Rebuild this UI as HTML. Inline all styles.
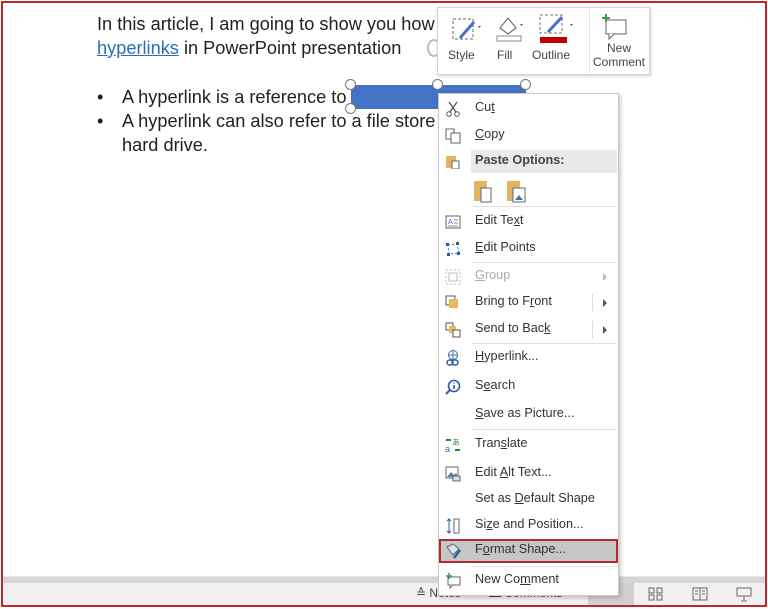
<!DOCTYPE html>
<html><head><meta charset="utf-8"><style>
*{margin:0;padding:0;box-sizing:border-box}
body{width:768px;height:609px;overflow:hidden;background:#fff;position:relative;font-family:"Liberation Sans",sans-serif}
.frame{position:absolute;left:1px;top:1px;width:766px;height:606px;border:2px solid #c0272d;pointer-events:none;z-index:20}
.art{position:absolute;left:97px;font-size:18.2px;color:#222;white-space:nowrap}
.bar1{position:absolute;left:3px;top:576px;width:762px;height:7px;background:#d6d6d6;border-top:1px solid #e8e8e8}
.status{position:absolute;left:3px;top:583px;width:762px;height:23px;background:#f1f1f1;font-size:12px;color:#444}
.mini{position:absolute;left:437px;top:7px;width:213px;height:68px;background:#fff;border:1px solid #d4d4d4;box-shadow:1px 1px 3px rgba(0,0,0,.2);font-size:12px;color:#444}
.mini div{position:absolute;text-align:center}
.menu{position:absolute;left:438px;top:93px;width:181px;height:503px;background:#fff;border:1px solid #c8c8c8;box-shadow:2px 2px 4px rgba(0,0,0,.2);font-size:12.7px;color:#333;z-index:5}
.it{position:absolute;left:36px;white-space:nowrap}
.sep{position:absolute;left:32px;right:2px;height:1px;background:#e1e1e1}
.ic{position:absolute;left:6px;width:16px;height:16px}
.arr{position:absolute;left:164px;width:0;height:0;border-left:4px solid #555;border-top:4px solid transparent;border-bottom:4px solid transparent}
u{text-decoration:underline}
</style></head><body>
<div class="frame"></div>
<div class="art" style="top:14px">In this article, I am going to show you how</div>
<div class="art" style="top:38px"><span style="color:#2a6ebb;text-decoration:underline">hyperlinks</span> in PowerPoint presentation</div>
<div style="position:absolute;left:427px;top:39px;width:14px;height:18px;border:2px solid #bbb;border-radius:50%"></div>
<div class="art" style="top:87px;left:97px">•</div>
<div class="art" style="top:87px;left:122px">A hyperlink is a reference to</div>
<div class="art" style="top:111px;left:97px">•</div>
<div class="art" style="top:111px;left:122px">A hyperlink can also refer to a file store</div>
<div class="art" style="top:135px;left:122px">hard drive.</div>
<div style="position:absolute;left:351px;top:85px;width:175px;height:24px;background:#4472c4"></div>
<div style="position:absolute;left:345px;top:79px;width:11px;height:11px;border:1px solid #777;border-radius:50%;background:#fff"></div>
<div style="position:absolute;left:432px;top:79px;width:11px;height:11px;border:1px solid #777;border-radius:50%;background:#fff"></div>
<div style="position:absolute;left:520px;top:79px;width:11px;height:11px;border:1px solid #777;border-radius:50%;background:#fff"></div>
<div style="position:absolute;left:345px;top:103px;width:11px;height:11px;border:1px solid #777;border-radius:50%;background:#fff"></div>

<div class="mini">
 <svg style="position:absolute;left:12px;top:6px" width="34" height="30"><rect x="3" y="5" width="20" height="20" fill="none" stroke="#666" stroke-dasharray="3 2"/><path d="M10 24 L24 8" stroke="#4472c4" stroke-width="3"/><path d="M28 12l3 0l-1.5 2z" fill="#555"/></svg>
 <svg style="position:absolute;left:56px;top:4px" width="34" height="32"><path d="M6 16 L14 6 L22 16 L14 22z" fill="none" stroke="#555"/><rect x="3" y="24" width="24" height="5" fill="none" stroke="#888"/><path d="M26 12l3 0l-1.5 2z" fill="#555"/></svg>
 <svg style="position:absolute;left:100px;top:4px" width="40" height="32"><rect x="2" y="3" width="22" height="18" fill="none" stroke="#777" stroke-dasharray="3 2"/><path d="M10 20 L24 5" stroke="#4472c4" stroke-width="3"/><rect x="2" y="25" width="27" height="6" fill="#c00000"/><path d="M32 12l3 0l-1.5 2z" fill="#555"/></svg>
 <div style="left:10px;top:40px">Style</div>
 <div style="left:59px;top:40px">Fill</div>
 <div style="left:94px;top:40px">Outline</div>
 <div style="left:151px;top:0;width:1px;height:66px;background:#e5e5e5"></div>
 <svg style="position:absolute;left:163px;top:6px" width="30" height="28"><rect x="5" y="6" width="20" height="14" fill="none" stroke="#666"/><path d="M8 20 l0 5 l5 -5" fill="#fff" stroke="#666"/><path d="M5 0v8M1 4h8" stroke="#3a9a5a" stroke-width="2"/></svg>
 <div style="left:155px;top:33px;line-height:14px">New<br>Comment</div>
</div>

<div class="menu">
 <svg class="ic" style="top:7px" viewBox="0 0 16 16"><path d="M4 1 L11 11 M12 1 L5 11" stroke="#555" stroke-width="1.3"/><circle cx="4" cy="13" r="2.3" fill="none" stroke="#555"/><circle cx="12" cy="13" r="2.3" fill="none" stroke="#555"/></svg>
 <div class="it" style="top:6px">Cu<u>t</u></div>
 <svg class="ic" style="top:34px" viewBox="0 0 16 16"><rect x="1" y="1" width="8" height="10" fill="#fff" stroke="#666"/><rect x="6" y="5" width="9" height="10" fill="#fff" stroke="#666"/></svg>
 <div class="it" style="top:33px"><u>C</u>opy</div>
 <div style="position:absolute;left:32px;top:56px;width:146px;height:23px;background:#e9e9e9"></div>
 <svg class="ic" style="top:59px" viewBox="0 0 16 16"><rect x="1" y="3" width="10" height="12" fill="#e3b560"/><rect x="7" y="8" width="7" height="8" fill="#fff" stroke="#666"/></svg>
 <div class="it" style="top:59px;font-weight:bold;color:#444">Paste Options:</div>
 <svg style="position:absolute;left:34px;top:84px" width="60" height="26"><rect x="1" y="3" width="13" height="20" fill="#e3b560"/><rect x="8" y="10" width="10" height="14" fill="#fff" stroke="#666"/><rect x="34" y="3" width="13" height="20" fill="#e3b560"/><rect x="40" y="10" width="12" height="14" fill="#fff" stroke="#666"/><path d="M42 22 l4-5 l4 5z" fill="#4472c4"/></svg>
 <div class="sep" style="top:112px"></div>
 <svg class="ic" style="top:120px" viewBox="0 0 16 16"><rect x="1" y="2" width="14" height="12" fill="none" stroke="#666"/><text x="3" y="10" font-size="7" fill="#3a6fb0">A</text><path d="M9 6h4M9 9h4M3 12h10" stroke="#888"/></svg>
 <div class="it" style="top:119px">Edit Te<u>x</u>t</div>
 <svg class="ic" style="top:147px" viewBox="0 0 16 16"><path d="M3 4 L12 3 L14 12 L4 13z" fill="none" stroke="#3a6fb0" stroke-dasharray="2 2"/><rect x="1" y="2" width="3" height="3" fill="#2a5fa0"/><rect x="11" y="1" width="3" height="3" fill="#2a5fa0"/><rect x="12" y="11" width="3" height="3" fill="#2a5fa0"/><rect x="2" y="12" width="3" height="3" fill="#2a5fa0"/></svg>
 <div class="it" style="top:146px"><u>E</u>dit Points</div>
 <div class="sep" style="top:168px"></div>
 <svg class="ic" style="top:175px" viewBox="0 0 16 16"><rect x="1" y="1" width="14" height="14" fill="none" stroke="#bbb" stroke-dasharray="2 2"/><rect x="4" y="4" width="8" height="8" fill="none" stroke="#bbb"/></svg>
 <div class="it" style="top:174px;color:#aaa"><u>G</u>roup</div>
 <div class="arr" style="top:179px;border-left-color:#bbb"></div>
 <svg class="ic" style="top:201px" viewBox="0 0 16 16"><rect x="1" y="1" width="9" height="9" fill="none" stroke="#555"/><rect x="4" y="4" width="9" height="9" fill="#e8b860"/></svg>
 <div class="it" style="top:200px">Bring to F<u>r</u>ont</div>
 <div style="position:absolute;left:153px;top:200px;width:1px;height:17px;background:#ddd"></div>
 <div class="arr" style="top:205px"></div>
 <svg class="ic" style="top:228px" viewBox="0 0 16 16"><rect x="1" y="1" width="7" height="7" fill="none" stroke="#555"/><rect x="4" y="4" width="7" height="7" fill="#e8b860"/><rect x="8" y="8" width="7" height="7" fill="#fff" stroke="#555"/></svg>
 <div class="it" style="top:227px">Send to Bac<u>k</u></div>
 <div style="position:absolute;left:153px;top:227px;width:1px;height:17px;background:#ddd"></div>
 <div class="arr" style="top:232px"></div>
 <div class="sep" style="top:249px"></div>
 <svg class="ic" style="top:256px" viewBox="0 0 16 16"><circle cx="8" cy="5" r="4.5" fill="none" stroke="#3a6fb0"/><path d="M3.5 5h9M8 0.5v9" stroke="#3a6fb0"/><rect x="2" y="10" width="6" height="5" rx="2.5" fill="none" stroke="#2a5fa0" stroke-width="1.5"/><rect x="7" y="10" width="6" height="5" rx="2.5" fill="none" stroke="#2a5fa0" stroke-width="1.5"/></svg>
 <div class="it" style="top:255px"><u>H</u>yperlink...</div>
 <svg class="ic" style="top:285px" viewBox="0 0 16 16"><circle cx="9" cy="7" r="5.5" fill="none" stroke="#2a5fa0" stroke-width="1.6"/><path d="M5 11 L1 15" stroke="#2a5fa0" stroke-width="2"/><path d="M9 6v4M9 3.8v.8" stroke="#2a5fa0" stroke-width="1.6"/></svg>
 <div class="it" style="top:284px">S<u>e</u>arch</div>
 <div class="it" style="top:312px"><u>S</u>ave as Picture...</div>
 <div class="sep" style="top:335px"></div>
 <svg class="ic" style="top:343px" viewBox="0 0 16 16"><text x="0" y="15" font-size="9" fill="#3a6fb0">a</text><text x="7" y="8" font-size="8" fill="#2a8a3a">あ</text><path d="M1 3h5M10 13h5" stroke="#2a8a3a" stroke-width="2"/></svg>
 <div class="it" style="top:342px">Tran<u>s</u>late</div>
 <svg class="ic" style="top:372px" viewBox="0 0 16 16"><rect x="1" y="1" width="12" height="11" fill="#fff" stroke="#666"/><path d="M2 11 l4-5 l3 3 l2-2 l2 4z" fill="#4a7fc0"/><rect x="8" y="10" width="7" height="5" fill="#ddd" stroke="#666"/></svg>
 <div class="it" style="top:371px">Edit <u>A</u>lt Text...</div>
 <div class="it" style="top:397px">Set as <u>D</u>efault Shape</div>
 <svg class="ic" style="top:424px" viewBox="0 0 16 16"><path d="M4 1v14M2 3l2-2l2 2M2 13l2 2l2-2" stroke="#2a5fa0" fill="none"/><rect x="9" y="1" width="5" height="14" fill="none" stroke="#666"/></svg>
 <div class="it" style="top:423px">Si<u>z</u>e and Position...</div>
 <div style="position:absolute;left:0;top:445px;width:179px;height:24px;background:#c6c6c6;border:2px solid #b22a2e"></div>
 <svg class="ic" style="top:449px" viewBox="0 0 16 16"><path d="M2 4 L8 1 L14 6 L8 12z" fill="#d8e4f0" stroke="#666"/><path d="M9 15 L15 7" stroke="#2a5fa0" stroke-width="2.5"/></svg>
 <div class="it" style="top:448px">F<u>o</u>rmat Shape...</div>
 <div class="sep" style="top:472px"></div>
 <svg class="ic" style="top:479px" viewBox="0 0 16 16"><rect x="3" y="4" width="12" height="8" fill="none" stroke="#666"/><path d="M5 12v3l3-3" fill="#fff" stroke="#666"/><path d="M4 0v6M1 3h6" stroke="#3a9a5a" stroke-width="1.5"/></svg>
 <div class="it" style="top:478px">New Co<u>m</u>ment</div>
</div>

<div class="bar1"></div>
<div class="status">
 <div style="position:absolute;left:413px;top:3px">≙ Notes</div>
 <div style="position:absolute;left:486px;top:3px">▬ Comments</div>
 <div style="position:absolute;left:585px;top:0;width:46px;height:23px;background:#d0d0d0"></div>
 <svg style="position:absolute;left:645px;top:4px" width="16" height="14"><rect x="1" y="1" width="5" height="5" fill="none" stroke="#666"/><rect x="9" y="1" width="5" height="5" fill="none" stroke="#666"/><rect x="1" y="8" width="5" height="5" fill="none" stroke="#666"/><rect x="9" y="8" width="5" height="5" fill="none" stroke="#666"/></svg>
 <svg style="position:absolute;left:689px;top:4px" width="16" height="14"><rect x="1" y="1" width="14" height="12" fill="none" stroke="#666"/><path d="M8 1v12M3 4h3M3 7h3M10 4h3M10 7h3" stroke="#666"/></svg>
 <svg style="position:absolute;left:733px;top:3px" width="16" height="16"><rect x="1" y="2" width="14" height="8" fill="none" stroke="#666"/><path d="M8 10v4M5 15h6" stroke="#666"/></svg>
</div>
</body></html>
